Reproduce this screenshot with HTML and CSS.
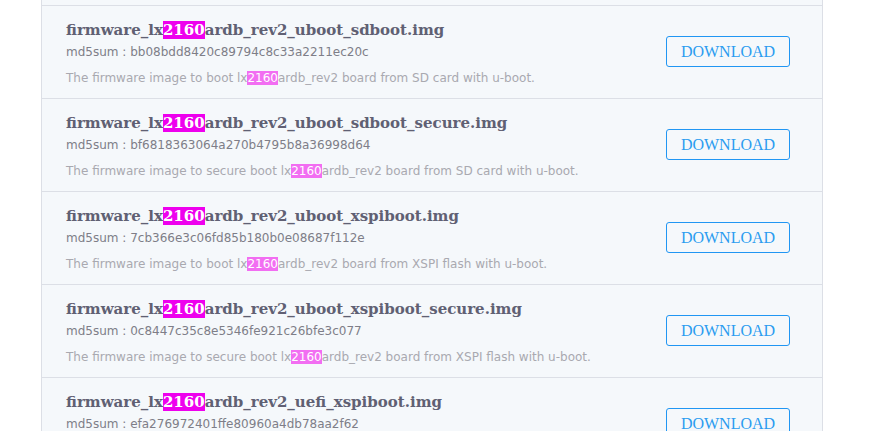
FILE: index.html
```html
<!DOCTYPE html>
<html>
<head>
	<meta charset="utf-8">
	<link rel="stylesheet" href="styles.css">
</head>
<body>
	<div class="lista">
		<div class="cola"></div>
		<div class="item">
			<div class="info">
				<div class="titulo">firmware_lx<span class="hl">2160</span>ardb_rev2_uboot_sdboot.img</div>
				<div class="md5">md5sum : bb08bdd8420c89794c8c33a2211ec20c</div>
				<div class="desc">The firmware image to boot lx<span class="hl2">2160</span>ardb_rev2 board from SD card with u-boot.</div>
			</div>
			<a class="boton">DOWNLOAD</a>
		</div>
		<div class="item">
			<div class="info">
				<div class="titulo">firmware_lx<span class="hl">2160</span>ardb_rev2_uboot_sdboot_secure.img</div>
				<div class="md5">md5sum : bf6818363064a270b4795b8a36998d64</div>
				<div class="desc">The firmware image to secure boot lx<span class="hl2">2160</span>ardb_rev2 board from SD card with u-boot.</div>
			</div>
			<a class="boton">DOWNLOAD</a>
		</div>
		<div class="item">
			<div class="info">
				<div class="titulo">firmware_lx<span class="hl">2160</span>ardb_rev2_uboot_xspiboot.img</div>
				<div class="md5">md5sum : 7cb366e3c06fd85b180b0e08687f112e</div>
				<div class="desc">The firmware image to boot lx<span class="hl2">2160</span>ardb_rev2 board from XSPI flash with u-boot.</div>
			</div>
			<a class="boton">DOWNLOAD</a>
		</div>
		<div class="item">
			<div class="info">
				<div class="titulo">firmware_lx<span class="hl">2160</span>ardb_rev2_uboot_xspiboot_secure.img</div>
				<div class="md5">md5sum : 0c8447c35c8e5346fe921c26bfe3c077</div>
				<div class="desc">The firmware image to secure boot lx<span class="hl2">2160</span>ardb_rev2 board from XSPI flash with u-boot.</div>
			</div>
			<a class="boton">DOWNLOAD</a>
		</div>
		<div class="item">
			<div class="info">
				<div class="titulo">firmware_lx<span class="hl">2160</span>ardb_rev2_uefi_xspiboot.img</div>
				<div class="md5">md5sum : efa276972401ffe80960a4db78aa2f62</div>
				<div class="desc">The firmware image to boot lx<span class="hl2">2160</span>ardb_rev2 board from XSPI flash with UEFI.</div>
			</div>
			<a class="boton">DOWNLOAD</a>
		</div>
	</div>
</body>
</html>
```

FILE: styles.css
```css
body {
	margin: 0;
	background: #fff;
	font-family: "DejaVu Sans", sans-serif;
	overflow: hidden;
}

.lista {
	margin-left: 41px;
	width: 780px;
	border-left: 1px solid #dcdfe6;
	border-right: 1px solid #dcdfe6;
	background: #f5f8fb;
}

.cola {
	height: 5px;
	border-bottom: 1px solid #dcdfe6;
}

.item {
	display: flex;
	align-items: center;
	height: 92px;
	border-bottom: 1px solid #dcdfe6;
}

.info {
	flex: 1;
	align-self: flex-start;
	padding-left: 24px;
	padding-top: 14px;
}

.titulo {
	font-family: "DejaVu Serif", serif;
	font-weight: bold;
	font-size: 15px;
	color: #606073;
	line-height: 20px;
}

.md5 {
	font-size: 12px;
	color: #7e7e88;
	line-height: 20px;
	margin-top: 2px;
}

.desc {
	font-size: 12px;
	color: #a9a9b0;
	line-height: 18px;
	margin-top: 7px;
}

.hl {
	background: #ee00ee;
	color: #fff;
}

.hl2 {
	background: #f26ef2;
	color: #fff;
}

.boton {
	box-sizing: border-box;
	width: 124px;
	height: 31px;
	margin-right: 32px;
	margin-bottom: 1px;
	border: 1px solid #2196f3;
	border-radius: 3px;
	color: #2b9cf0;
	font-family: "Liberation Serif", serif;
	font-size: 16px;
	display: flex;
	align-items: center;
	justify-content: center;
}
```
